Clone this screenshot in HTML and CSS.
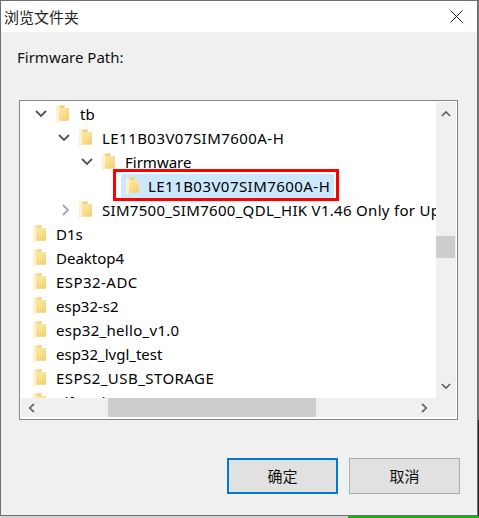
FILE: index.html
```html
<!DOCTYPE html>
<html lang="zh-CN">
<head>
    <meta charset="UTF-8">
    <title>浏览文件夹</title>
    <link rel="stylesheet" href="styles.css">
</head>
<body>
    <svg class="icon-defs" width="0" height="0" aria-hidden="true">
        <defs>
            <linearGradient id="folderFront" x1="0" y1="0" x2="0.6" y2="1">
                <stop offset="0" stop-color="#fcebaa"/>
                <stop offset="1" stop-color="#f6d277"/>
            </linearGradient>
            <symbol id="folder" viewBox="0 0 13 18">
                <path d="M0 1 L8.5 0 V3 H13 V15.5 H3 L0 18 Z" fill="#f3d27c"/>
                <path d="M0 1 L3.5 0.5 V15.5 L0 18 Z" fill="#fdf2cb"/>
                <path d="M3.5 3 H13 V15.5 H3.5 Z" fill="url(#folderFront)"/>
            </symbol>
            <symbol id="chevDown" viewBox="0 0 12 8">
                <path d="M1 1 L6 6 L11 1" fill="none" stroke="currentColor" stroke-width="1.8"/>
            </symbol>
            <symbol id="chevRight" viewBox="0 0 8 12">
                <path d="M1 1 L6 6 L1 11" fill="none" stroke="currentColor" stroke-width="1.8"/>
            </symbol>
            <symbol id="chevUp" viewBox="0 0 12 8">
                <path d="M1 7 L6 2 L11 7" fill="none" stroke="currentColor" stroke-width="2"/>
            </symbol>
            <symbol id="chevLeft" viewBox="0 0 8 12">
                <path d="M7 1 L2 6 L7 11" fill="none" stroke="currentColor" stroke-width="2"/>
            </symbol>
        </defs>
    </svg>

    <div class="dialog">
        <div class="titlebar">
            <span class="title">浏览文件夹</span>
            <svg class="close" width="13" height="13" viewBox="0 0 13 13">
                <path d="M0.5 0.5 L12.5 12.5 M12.5 0.5 L0.5 12.5" stroke="#1a1a1a" stroke-width="1" fill="none"/>
            </svg>
        </div>
        <div class="content">
            <div class="path-label">Firmware Path:</div>

            <div class="tree-box">
                <div class="tree-main">
                    <ul class="tree">
                        <li class="row indent-1"><svg class="twisty"><use href="#chevDown"/></svg><svg class="folder"><use href="#folder"/></svg><span>tb</span></li>
                        <li class="row indent-2"><svg class="twisty"><use href="#chevDown"/></svg><svg class="folder"><use href="#folder"/></svg><span class="caps">LE11B03V07SIM7600A-H</span></li>
                        <li class="row indent-3"><svg class="twisty"><use href="#chevDown"/></svg><svg class="folder"><use href="#folder"/></svg><span>Firmware</span></li>
                        <li class="row indent-4 selected"><svg class="folder"><use href="#folder"/></svg><span class="caps">LE11B03V07SIM7600A-H</span></li>
                        <li class="row indent-2"><svg class="twisty closed"><use href="#chevRight"/></svg><svg class="folder"><use href="#folder"/></svg><span class="mixed">SIM7500_SIM7600_QDL_HIK V1.46 Only for Upgrade</span></li>
                        <li class="row indent-0"><svg class="folder"><use href="#folder"/></svg><span>D1s</span></li>
                        <li class="row indent-0"><svg class="folder"><use href="#folder"/></svg><span>Deaktop4</span></li>
                        <li class="row indent-0"><svg class="folder"><use href="#folder"/></svg><span class="caps">ESP32-ADC</span></li>
                        <li class="row indent-0"><svg class="folder"><use href="#folder"/></svg><span>esp32-s2</span></li>
                        <li class="row indent-0"><svg class="folder"><use href="#folder"/></svg><span class="mixed">esp32_hello_v1.0</span></li>
                        <li class="row indent-0"><svg class="folder"><use href="#folder"/></svg><span>esp32_lvgl_test</span></li>
                        <li class="row indent-0"><svg class="folder"><use href="#folder"/></svg><span class="caps">ESPS2_USB_STORAGE</span></li>
                        <li class="row indent-0"><svg class="folder"><use href="#folder"/></svg><span>elfread</span></li>
                    </ul>
                    <div class="vscroll">
                        <svg class="arrow-v"><use href="#chevUp"/></svg>
                        <div class="vtrack"><div class="vthumb"></div></div>
                        <svg class="arrow-v flip"><use href="#chevUp"/></svg>
                    </div>
                </div>
                <div class="hscroll">
                    <svg class="arrow-h"><use href="#chevLeft"/></svg>
                    <div class="htrack"><div class="hthumb"></div></div>
                    <svg class="arrow-h flip"><use href="#chevLeft"/></svg>
                    <div class="corner"></div>
                </div>
            </div>

            <div class="buttons">
                <button class="btn default">确定</button>
                <button class="btn">取消</button>
            </div>
        </div>
    </div>
    <!-- red marker drawn over the tree -->
    <div class="highlight"></div>
    <div class="desk-strip"><div class="desk-green"></div></div>
</body>
</html>
```

FILE: styles.css
```css
/* Win10 folder picker dialog */
html, body {
    margin: 0;
    padding: 0;
}
body {
    position: relative;
    width: 479px;
    height: 518px;
    overflow: hidden;
    background: linear-gradient(#6d7a78 420px, #1f2a22 420px);
    font-family: "Noto Sans", "Noto Sans CJK SC", sans-serif;
    font-size: 15px;
    color: #000;
}
.icon-defs {
    position: absolute;
}
.dialog {
    box-sizing: border-box;
    width: 478px;
    height: 516px;
    border: 1px solid #6f6f6f;
    display: flex;
    flex-direction: column;
    background: #f0f0f0;
}
.titlebar {
    height: 31px;
    background: #fff;
    display: flex;
    align-items: center;
    justify-content: space-between;
    padding: 0 14px 0 3px;
    flex: none;
}
.title {
    font-family: "Noto Sans CJK SC", sans-serif;
    font-size: 15px;
    color: #222;
}
.content {
    flex: 1;
    display: flex;
    flex-direction: column;
    padding: 13px 18px 0 18px;
}
.path-label {
    height: 55px;
    line-height: 24px;
    margin-left: -2px;
    color: #111;
}
/* tree */
.tree-box {
    box-sizing: border-box;
    width: 439px;
    height: 320px;
    border: 1px solid #82878c;
    padding: 1px 1px 2px;
    background: #fff;
    display: flex;
    flex-direction: column;
}
.tree-main {
    flex: 1;
    display: flex;
    min-height: 0;
}
.tree {
    flex: 1;
    min-width: 0;
    list-style: none;
    margin: 0;
    padding: 0;
    overflow: hidden;
    background: #fff;
}
.row {
    height: 24px;
    display: flex;
    align-items: center;
    white-space: nowrap;
    position: relative;
}
.row span {
    margin-left: 10px;
    line-height: 20px;
    flex: none;
}
/* the reference face has wider capitals and digits than Noto Sans */
.row .caps {
    letter-spacing: 0.45px;
}
.row .mixed {
    letter-spacing: 0.3px;
}
.indent-0 { padding-left: 12px; }
.indent-1 { padding-left: 14px; }
.indent-1 span { margin-left: 11px; }
.indent-2 { padding-left: 37px; }
.indent-3 { padding-left: 60px; }
.indent-4 { padding-left: 105px; }
.indent-4 span { margin-left: 9px; }
.twisty {
    width: 12px;
    height: 8px;
    margin-right: 9px;
    color: #555;
    flex: none;
}
.twisty.closed {
    width: 8px;
    height: 12px;
    margin: 0 9px 0 4px;
    color: #a6a6a6;
}
.folder {
    width: 13px;
    height: 18px;
    flex: none;
}
.selected::before {
    content: "";
    position: absolute;
    left: 100px;
    width: 213px;
    top: 0;
    bottom: -1px;
    background: #cce8ff;
}
.selected .folder, .selected span {
    position: relative;
}
/* scrollbars */
.vscroll {
    width: 20px;
    flex: none;
    background: #f0f0f0;
    display: flex;
    flex-direction: column;
    color: #606060;
}
.vtrack {
    flex: 1;
    padding-top: 113px;
}
.vthumb {
    height: 22px;
    background: #cdcdcd;
    margin-right: 1px;
}
.arrow-v {
    width: 10px;
    height: 7px;
    margin: 8px 0 6px 5px;
    flex: none;
}
.arrow-v.flip {
    margin: 6px 0 8px 5px;
}
.flip {
    transform: scale(-1);
}
.hscroll {
    height: 19px;
    flex: none;
    display: flex;
    align-items: center;
    background: #f0f0f0;
    color: #606060;
}
.htrack {
    flex: 1;
    height: 100%;
    padding-left: 66px;
    box-sizing: border-box;
}
.hthumb {
    width: 208px;
    height: 100%;
    background: #cdcdcd;
}
.arrow-h {
    width: 7px;
    height: 10px;
    margin: 0 7px;
    flex: none;
}
.arrow-h.flip {
    margin: 0 8px 0 6px;
}
.corner {
    width: 20px;
    height: 100%;
    flex: none;
    background: #f0f0f0;
}
/* buttons */
.buttons {
    display: flex;
    justify-content: flex-end;
    gap: 11px;
    margin-top: 38px;
    width: 441px;
}
.btn {
    box-sizing: border-box;
    width: 111px;
    height: 36px;
    background: #e1e1e1;
    border: 1px solid #adadad;
    font-family: "Noto Sans CJK SC", sans-serif;
    font-size: 15px;
    color: #111;
    padding: 0 0 2px;
}
.btn.default {
    border: 2px solid #0078d7;
}
/* overlays */
.highlight {
    position: absolute;
    left: 113px;
    top: 169px;
    width: 226px;
    height: 32px;
    box-sizing: border-box;
    border: 3px solid #f00;
}
.desk-strip {
    position: absolute;
    left: 0;
    right: 0;
    bottom: 0;
    height: 2px;
    background: #d4d4d4;
}
.desk-green {
    margin-left: 348px;
    height: 100%;
    background: #0fb90f;
}
```
